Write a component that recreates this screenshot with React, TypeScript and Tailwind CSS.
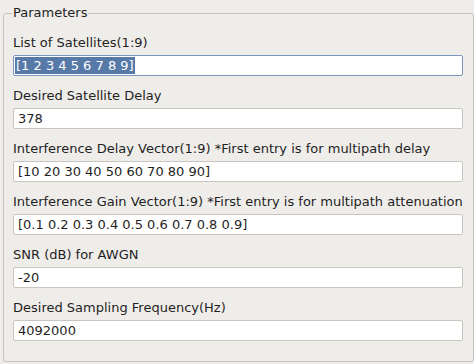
const fields = [
  { label: 'List of Satellites(1:9)', value: '[1 2 3 4 5 6 7 8 9]', selected: true },
  { label: 'Desired Satellite Delay', value: '378' },
  { label: 'Interference Delay Vector(1:9) *First entry is for multipath delay', value: '[10 20 30 40 50 60 70 80 90]' },
  { label: 'Interference Gain Vector(1:9) *First entry is for multipath attenuation', value: '[0.1 0.2 0.3 0.4 0.5 0.6 0.7 0.8 0.9]' },
  { label: 'SNR (dB) for AWGN', value: '-20' },
  { label: 'Desired Sampling Frequency(Hz)', value: '4092000' },
];

export default function App() {
  return (
    <div
      className="w-[474px] h-[364px] bg-[#efedea] pt-[5px] pl-[3px] text-[#1f1f1f] text-[13px]"
      style={{ fontFamily: '"DejaVu Sans", sans-serif' }}
    >
      <fieldset className="w-[467px] h-[357px] border border-[#c6c2bc] rounded-[3px] pl-[9px] pr-[10px]">
        <legend className="px-px -ml-px leading-[16px]">Parameters</legend>
        <div className="flex flex-col gap-[11px] mt-[13px]">
          {fields.map((f) => (
            <div key={f.label} className="flex flex-col gap-[4px]">
              <div className="leading-[17px] whitespace-nowrap">{f.label}</div>
              {f.selected ? (
                <div className="h-[21px] bg-white border border-[#7b97bb] rounded-[2px] flex items-center pl-px">
                  <span className="bg-[#5679a8] text-white leading-[17px] px-px">{f.value}</span>
                </div>
              ) : (
                <div className="h-[21px] bg-white border border-[#c9c6c1] rounded-[2px] flex items-center pl-[4px] leading-[17px]">
                  {f.value}
                </div>
              )}
            </div>
          ))}
        </div>
      </fieldset>
    </div>
  );
}
